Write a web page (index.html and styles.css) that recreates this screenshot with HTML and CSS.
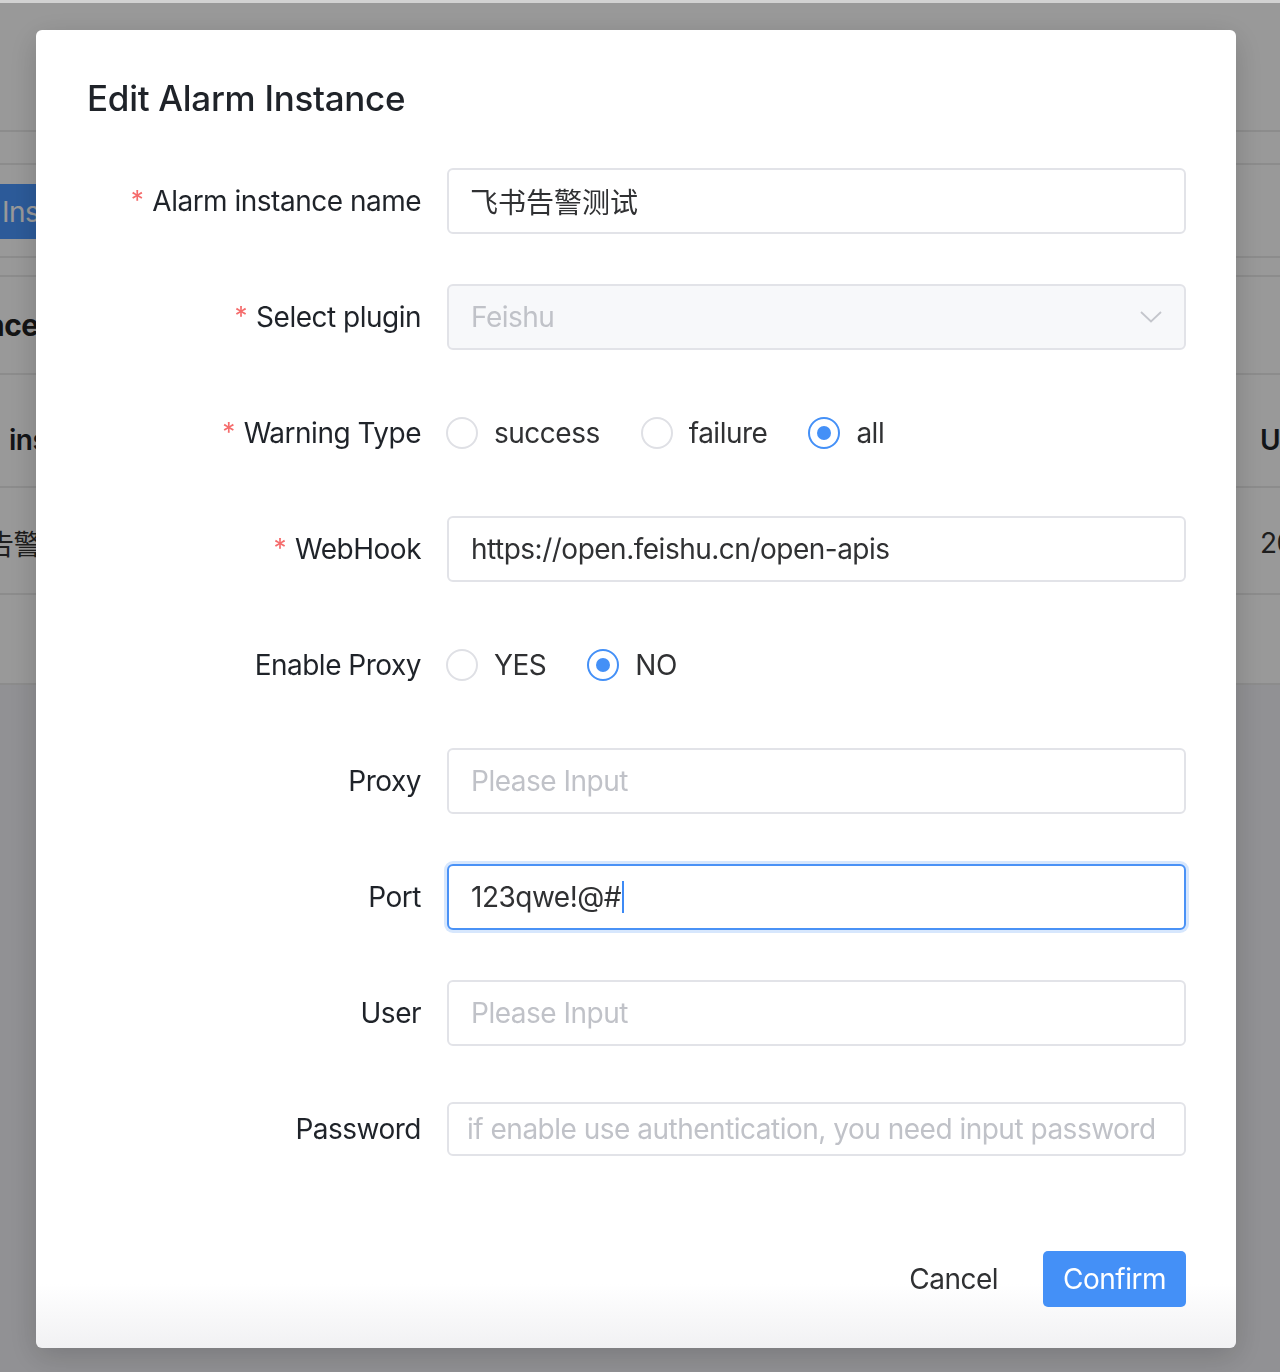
FILE: index.html
```html
<!DOCTYPE html>
<html lang="en">
<head>
<meta charset="utf-8">
<title>Edit Alarm Instance</title>
<link rel="stylesheet" href="styles.css">
</head>
<body>
<div class="chrome"></div>
<div class="page">
  <div class="header"></div>
  <div class="crumbs"></div>
  <div class="toolbar"><span class="btn-create">Instance</span></div>
  <div class="band"></div>
  <div class="page-title"><span class="cut-title">nce Manage</span></div>
  <div class="trow thead"><span class="cell-a"><span class="cut-ins">instance name</span></span><span class="cell-b">Update Time</span></div>
  <div class="trow tdata"><span class="cell-a"><span class="cut-cn">告警测试</span></span><span class="cell-b">2022-10-12</span></div>
  <div class="trow tempty"></div>
</div>
<div class="overlay"></div>
<div class="modal">
  <div class="modal-title">Edit Alarm Instance</div>
  <div class="form">
    <div class="row">
      <div class="label"><span class="req">*</span>Alarm instance name</div>
      <div class="field cjk">飞书告警测试</div>
    </div>
    <div class="row">
      <div class="label"><span class="req">*</span>Select plugin</div>
      <div class="field select"><span class="ph">Feishu</span>
        <svg class="chev" width="22" height="12" viewBox="0 0 22 12"><polyline points="1,1 11,10.5 21,1" fill="none" stroke="#c4c6cc" stroke-width="1.8"/></svg>
      </div>
    </div>
    <div class="row">
      <div class="label"><span class="req">*</span>Warning Type</div>
      <div class="radios">
        <span class="radio"><span class="dot"></span>success</span>
        <span class="radio"><span class="dot"></span>failure</span>
        <span class="radio on"><span class="dot"></span>all</span>
      </div>
    </div>
    <div class="row">
      <div class="label"><span class="req">*</span>WebHook</div>
      <div class="field">https://open.feishu.cn/open-apis</div>
    </div>
    <div class="row">
      <div class="label">Enable Proxy</div>
      <div class="radios">
        <span class="radio"><span class="dot"></span>YES</span>
        <span class="radio on"><span class="dot"></span>NO</span>
      </div>
    </div>
    <div class="row">
      <div class="label">Proxy</div>
      <div class="field"><span class="ph">Please Input</span></div>
    </div>
    <div class="row">
      <div class="label">Port</div>
      <div class="field focus">123qwe!@#<span class="caret"></span></div>
    </div>
    <div class="row">
      <div class="label">User</div>
      <div class="field"><span class="ph">Please Input</span></div>
    </div>
    <div class="row">
      <div class="label">Password</div>
      <div class="field small"><span class="ph">if enable use authentication, you need input password</span></div>
    </div>
  </div>
  <div class="footer">
    <span class="btn btn-text">Cancel</span>
    <span class="btn btn-primary">Confirm</span>
  </div>
</div>
</body>
</html>
```
FILE: styles.css
```css
html, body {
  margin: 0;
  padding: 0;
}
body {
  width: 1280px;
  height: 1372px;
  overflow: hidden;
  background: #f2f2f7;
  font-family: Inter, "Noto Sans CJK SC", sans-serif;
  color: #1f2329;
  letter-spacing: -0.5px;
}
.chrome {
  height: 3px;
  background: #d2d2d2;
}
.page {
  background: #f2f2f7;
}
.header {
  height: 127px;
  background: #fff;
  border-bottom: 2px solid #eaeaea;
}
.crumbs {
  height: 31px;
  background: #fff;
  border-bottom: 2px solid #eaeaea;
}
.toolbar {
  height: 93px;
  box-sizing: border-box;
  padding-top: 19px;
  background: #fff;
  border-bottom: 2px solid #eaeaea;
}
.btn-create {
  display: inline-flex;
  align-items: center;
  height: 55px;
  width: 200px;
  padding-left: 2px;
  background: #4a97ff;
  color: #fff;
  font-size: 28px;
  border-radius: 0 6px 6px 0;
}
.band {
  height: 17px;
  background: #fff;
  border-bottom: 2px solid #eaeaea;
}
.page-title {
  height: 98px;
  box-sizing: border-box;
  display: flex;
  align-items: center;
  background: #fff;
  border-bottom: 2px solid #eaeaea;
  font-size: 30px;
  font-weight: 700;
  color: #222;
  overflow: hidden;
}
.cut-title {
  margin-left: -14px;
  white-space: nowrap;
}
.trow {
  display: flex;
  align-items: center;
  box-sizing: border-box;
  background: #fff;
  border-bottom: 2px solid #eaeaea;
  font-size: 28px;
  white-space: nowrap;
  overflow: hidden;
}
.thead {
  height: 113px;
  padding-top: 18px;
  font-weight: 600;
}
.tdata {
  height: 107px;
  padding-top: 4px;
  color: #333;
}
.tempty {
  height: 90px;
}
.cell-a {
  flex: 0 0 1260px;
  overflow: hidden;
}
.cell-b {
  flex: 0 0 auto;
}
.cut-ins {
  padding-left: 9px;
}
.cut-cn {
  display: inline-block;
  margin-left: -14px;
}
.overlay {
  position: fixed;
  left: 0;
  right: 0;
  top: 3px;
  bottom: 0;
  background: rgba(0, 0, 0, 0.4);
}
.modal {
  position: fixed;
  left: 36px;
  top: 30px;
  width: 1200px;
  height: 1318px;
  box-sizing: border-box;
  padding: 44px 50px 41px 51px;
  display: flex;
  flex-direction: column;
  border-radius: 6px;
  background: linear-gradient(to bottom, #fff calc(100% - 64px), #f1f1f3 100%);
  box-shadow: 0 8px 30px rgba(0, 0, 0, 0.18);
}
.modal-title {
  height: 48px;
  line-height: 48px;
  font-size: 35px;
  font-weight: 500;
  color: #1f2329;
  letter-spacing: -0.3px;
}
.form {
  margin-top: 46px;
  display: flex;
  flex-direction: column;
  gap: 50px;
}
.row {
  display: flex;
  align-items: center;
  gap: 26px;
  height: 66px;
}
.label {
  flex: 0 0 334px;
  text-align: right;
  font-size: 28px;
  color: #1f2329;
  white-space: nowrap;
}
.req {
  color: #f56c6c;
  margin-right: 9px;
  font-size: 26px;
  position: relative;
  top: -2px;
}
.field {
  flex: 1;
  height: 66px;
  box-sizing: border-box;
  border: 2px solid #e2e3e8;
  border-radius: 6px;
  padding: 0 22px;
  display: flex;
  align-items: center;
  font-size: 28px;
  color: #303133;
  white-space: nowrap;
  background: #fff;
}
.field.cjk {
  letter-spacing: 0;
  padding-left: 21px;
}
.field.small {
  height: 54px;
  padding: 0 18px;
}
.ph {
  color: #c0c2c8;
}
.select {
  background: #f7f8fa;
  justify-content: space-between;
}
.field.focus {
  border-color: #4a92f6;
  box-shadow: 0 0 0 3px rgba(74, 146, 246, 0.22);
}
.caret {
  display: inline-block;
  width: 2px;
  height: 32px;
  margin-left: 1px;
  background: #3d8af5;
}
.radios {
  display: flex;
  align-items: center;
  gap: 41px;
  margin-left: -1px;
  font-size: 28px;
  color: #303133;
}
.radio {
  display: inline-flex;
  align-items: center;
  gap: 16px;
}
.dot {
  width: 32px;
  height: 32px;
  box-sizing: border-box;
  border: 2px solid #dfe0e5;
  border-radius: 50%;
  display: inline-flex;
  align-items: center;
  justify-content: center;
  background: #fff;
}
.radio.on .dot {
  border-color: #4490f7;
}
.radio.on .dot::after {
  content: "";
  width: 14px;
  height: 14px;
  border-radius: 50%;
  background: #4490f7;
}
.footer {
  margin-top: auto;
  display: flex;
  justify-content: flex-end;
  align-items: center;
  gap: 25px;
}
.btn {
  height: 56px;
  padding: 0 20px;
  display: inline-flex;
  align-items: center;
  font-size: 28px;
  border-radius: 5px;
}
.btn-text {
  color: #303133;
}
.btn-primary {
  background: #4490f7;
  color: #fff;
}
```
